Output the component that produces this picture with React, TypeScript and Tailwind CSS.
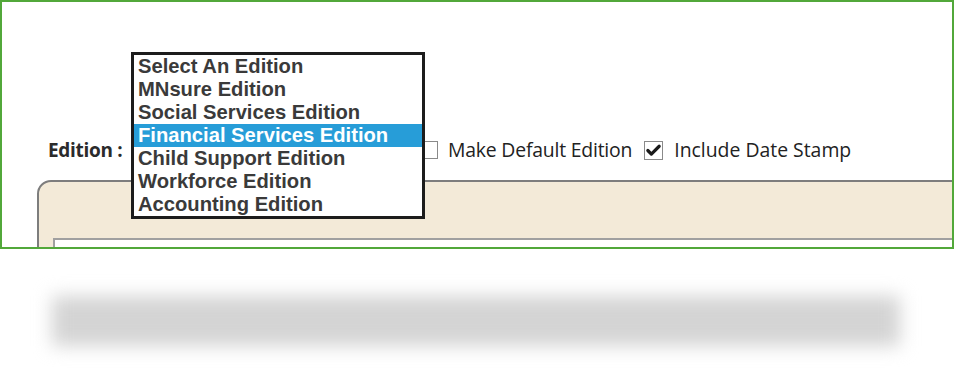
import { Check } from "lucide-react";

const editions = [
  "Select An Edition",
  "MNsure Edition",
  "Social Services Edition",
  "Financial Services Edition",
  "Child Support Edition",
  "Workforce Edition",
  "Accounting Edition",
];

const SELECTED = 3;

export default function App() {
  return (
    <div className="relative h-[374px] w-[954px] overflow-hidden bg-white">
      <div
        className="relative h-[249px] w-[954px] overflow-hidden border-2 border-[#52a83a] bg-white"
        style={{ fontFamily: '"Open Sans", "Noto Sans", sans-serif' }}
      >
        {/* edition row */}
        <div className="mt-[136px] flex h-[24px] items-center pl-[46px] text-[#2b2b2b]">
          <span className="w-[83px] text-[19px] font-bold tracking-[-0.3px]">Edition :</span>
          <div className="w-[290px]" />
          <span className="h-[18px] w-[17px] border border-[#8a8a8a] bg-white" />
          <span className="ml-[10px] text-[19.4px] tracking-[-0.2px] text-[#222]">Make Default Edition</span>
          <span className="ml-[12px] flex h-[19px] w-[19px] items-center justify-center border border-[#8a8a8a] bg-white">
            <Check size={17} strokeWidth={4.5} className="text-[#1a1a1a]" />
          </span>
          <span className="ml-[11px] text-[19.4px] tracking-[0px] text-[#222]">Include Date Stamp</span>
        </div>

        {/* beige panel */}
        <div className="ml-[35px] mt-[18px] h-[80px] w-[940px] rounded-tl-[14px] border-2 border-[#7d7d7d] bg-[#f3ead8] pl-[14px] pt-[56px]">
          <div className="h-[40px] w-[920px] border-2 border-[#a0a0a0] bg-white" />
        </div>

        {/* open dropdown list */}
        <div
          className="absolute left-[129px] top-[50px] w-[294px] border-[3px] border-[#1c1c1c] bg-white"
          style={{ fontFamily: '"Liberation Sans", Arial, sans-serif' }}
        >
          {editions.map((e, i) => (
            <div
              key={e}
              className={
                i === SELECTED
                  ? "h-[23px] bg-[#279dd8] pl-[4px] text-[20.2px] font-bold leading-[23px] text-white"
                  : "h-[23px] pl-[4px] text-[20.2px] font-bold leading-[23px] text-[#3a3a3a]"
              }
            >
              {e}
            </div>
          ))}
        </div>
      </div>

      {/* blurred shadow */}
      <div className="absolute left-[52px] top-[296px] h-[50px] w-[848px] bg-[#d4d4d4] blur-[9px]" />
    </div>
  );
}
